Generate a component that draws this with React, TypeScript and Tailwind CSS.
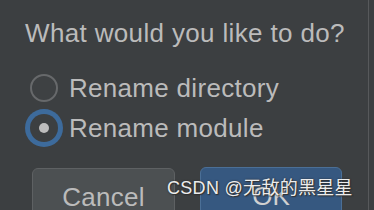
const options = [
  { id: "directory", label: "Rename directory" },
  { id: "module", label: "Rename module" },
];

function Radio({ checked }: { checked: boolean }) {
  if (checked) {
    return (
      <span className="flex h-[38px] w-[38px] items-center justify-center rounded-full bg-[#3d6b9c]">
        <span className="flex h-[28px] w-[28px] items-center justify-center rounded-full bg-[#3c3f41]">
          <span className="h-[10px] w-[10px] rounded-full bg-[#bdbdbd]" />
        </span>
      </span>
    );
  }
  return (
    <span className="flex h-[38px] w-[38px] items-center justify-center">
      <span className="h-[28px] w-[28px] rounded-full border-2 border-[#67696b] bg-[#3e4143]" />
    </span>
  );
}

export default function App() {
  const selected = "module";

  return (
    <div
      className="relative flex h-[210px] w-[374px] overflow-hidden bg-[#3c3f41] text-[#bbbbbb]"
      style={{ fontFamily: '"Liberation Sans", Arial, sans-serif' }}
    >
      <div className="flex h-full w-[369px] flex-col border-r border-[#57595b] pl-[25px] pt-[18px]">
        <h1 className="h-[30px] text-[26px] leading-[30px] font-normal tracking-[0.35px]">
          What would you like to do?
        </h1>

        <div className="mt-[20px] flex flex-col">
          {options.map((option) => (
            <label key={option.id} className="flex h-[40px] items-center gap-[6px]">
              <Radio checked={selected === option.id} />
              <span className="text-[26px] leading-[30px] tracking-[0.3px]">{option.label}</span>
            </label>
          ))}
        </div>

        <div className="mt-[20px] flex gap-[25px] pl-[7px]">
          <button className="h-[50px] w-[143px] shrink-0 self-start rounded-[6px] border border-[#5e6163] bg-[#4c5052] pt-[7px] text-[26px] leading-[30px] tracking-[0.3px] text-[#bbbbbb]">
            Cancel
          </button>
          <button className="-mt-px h-[50px] w-[142px] shrink-0 self-start rounded-[6px] border border-[#4b6f96] bg-[#365880] pt-[8px] text-[26px] leading-[30px] text-[#d0d0d0]">
            OK
          </button>
        </div>
      </div>

      <span
        className="absolute left-[167px] top-[178px] whitespace-nowrap text-[18px] leading-[20px] tracking-[0.3px] text-[#ececec]"
        style={{
          fontFamily: '"Liberation Sans", "Noto Sans CJK SC", sans-serif',
          textShadow: "0 0 2px #2a2a2a, 1px 1px 1px #333",
        }}
      >
        CSDN @无敌的黑星星
      </span>
    </div>
  );
}
